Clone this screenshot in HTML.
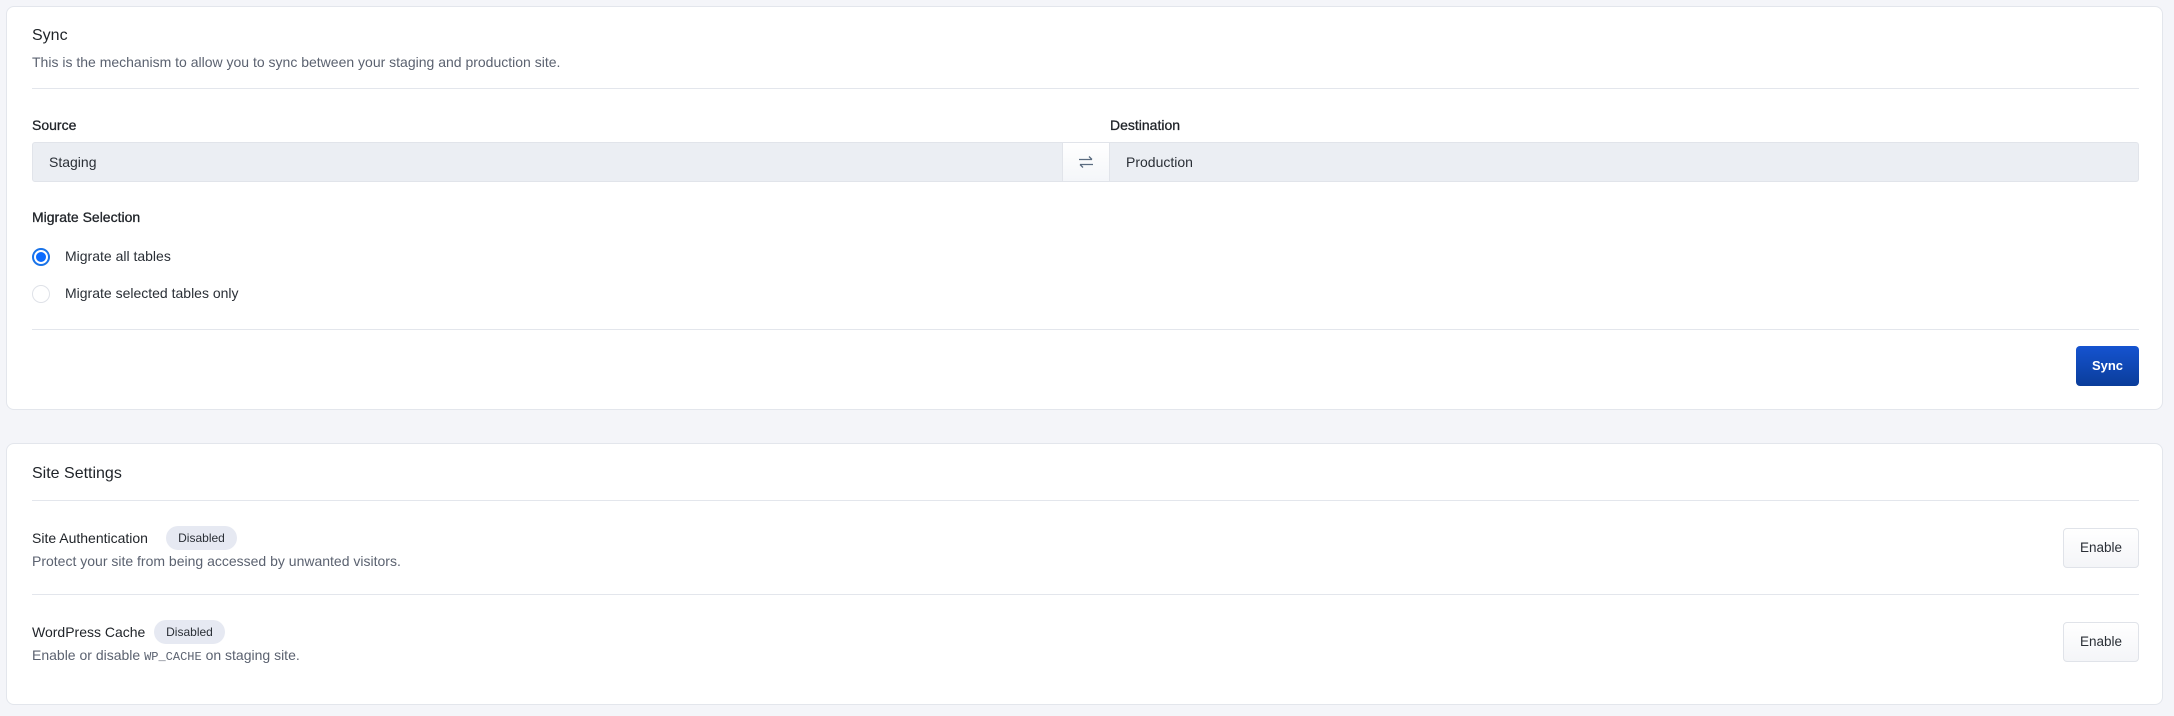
<!DOCTYPE html>
<html><head><meta charset="utf-8"><style>
*{box-sizing:border-box;margin:0;padding:0}
body{width:2174px;height:716px;background:#f4f5f9;font-family:"Liberation Sans",sans-serif;color:#1f2328;position:relative;overflow:hidden}
.card{position:absolute;left:6px;width:2157px;background:#fff;border:1px solid #e3e6ec;border-radius:8px}
.a{position:absolute;white-space:nowrap}
.hr{position:absolute;width:2107px;height:1px;background:#e3e6ec}
.t{font-size:16px;color:#1f2328}
.s{font-size:14px;color:#5b6270}
.l{font-size:14px;color:#1f2328;-webkit-text-stroke:0.3px #1f2328}
.badge{position:absolute;height:24px;border-radius:12px;background:#e6e9f2;font-size:12px;line-height:24px;text-align:center;color:#2a2f36}
.btn{position:absolute;width:76px;height:40px;border:1px solid #e0e3e9;border-radius:4px;background:linear-gradient(#fff,#f4f5f8);font-size:13.5px;line-height:38px;text-align:center;color:#2a2f36}
</style></head><body>
<div class="card" style="top:6px;height:404px">
  <div class="a t" style="left:25px;top:20px">Sync</div>
  <div class="a s" style="left:25px;top:47px">This is the mechanism to allow you to sync between your staging and production site.</div>
  <div class="hr" style="top:81px;left:25px"></div>
  <div class="a l" style="left:25px;top:110px">Source</div>
  <div class="a l" style="left:1103px;top:110px">Destination</div>
  <div class="a" style="left:25px;top:135px;width:2107px;height:40px;background:#ebeef3;border:1px solid #e1e4ea;border-radius:3px"></div>
  <div class="a" style="left:1055px;top:135px;width:48px;height:40px;background:linear-gradient(#fff,#f4f6f9);border:1px solid #e1e4ea"></div>
  <svg class="a" style="left:1070px;top:148px" width="18" height="14" viewBox="0 0 18 14"><path d="M2 4.5H15M12 1.5L15 4.5M16 9.5H3M6 12.5L3 9.5" stroke="#5a6b80" stroke-width="1.3" fill="none"/></svg>
  <div class="a s" style="left:42px;top:147px;color:#2a2f36">Staging</div>
  <div class="a s" style="left:1119px;top:147px;color:#2a2f36">Production</div>
  <div class="a l" style="left:25px;top:202px">Migrate Selection</div>
  <div class="a" style="left:25px;top:241px;width:18px;height:18px;border-radius:50%;border:2px solid #1a73e8;background:#fff"><div style="margin:2px;width:10px;height:10px;border-radius:50%;background:#0b6bff"></div></div>
  <div class="a" style="left:25px;top:278px;width:18px;height:18px;border-radius:50%;border:1px solid #dfe2e8"></div>
  <div class="a s" style="left:58px;top:241px;color:#2a2f36">Migrate all tables</div>
  <div class="a s" style="left:58px;top:278px;color:#2a2f36">Migrate selected tables only</div>
  <div class="hr" style="top:322px;left:25px"></div>
  <div class="a" style="left:2069px;top:339px;width:63px;height:40px;border-radius:4px;background:linear-gradient(#1553d0,#0a3d9a);color:#fff;font-weight:bold;font-size:13px;line-height:40px;text-align:center">Sync</div>
</div>
<div class="card" style="top:443px;height:262px">
  <div class="a t" style="left:25px;top:21px">Site Settings</div>
  <div class="hr" style="top:56px;left:25px"></div>
  <div class="a" style="left:25px;top:86px;color:#1f2328;font-size:14px">Site Authentication</div>
  <div class="badge" style="left:159px;top:82px;width:71px">Disabled</div>
  <div class="a s" style="left:25px;top:109px">Protect your site from being accessed by unwanted visitors.</div>
  <div class="btn" style="left:2056px;top:84px">Enable</div>
  <div class="hr" style="top:150px;left:25px"></div>
  <div class="a" style="left:25px;top:180px;color:#1f2328;font-size:14px">WordPress Cache</div>
  <div class="badge" style="left:147px;top:176px;width:71px">Disabled</div>
  <div class="a s" style="left:25px;top:203px">Enable or disable <span style="font-family:'Liberation Mono',monospace;font-size:12px">WP_CACHE</span> on staging site.</div>
  <div class="btn" style="left:2056px;top:178px">Enable</div>
</div>
</body></html>
